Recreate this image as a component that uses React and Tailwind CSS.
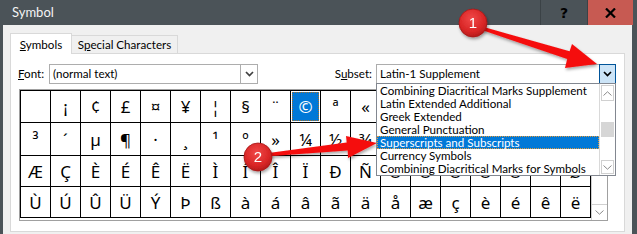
import React from 'react';

// grid of Latin-1 Supplement characters, 19 per row
// (cells under the open list in rows 1-2 are fully hidden, left empty)
const rows = [
    ['\u00A0', '¡', '¢', '£', '¤', '¥', '¦', '§', '¨', '©', 'ª', '«', '', '', '', '', '', '', ''],
    ['³', '´', 'µ', '¶', '·', '¸', '¹', 'º', '»', '¼', '½', '¾', '', '', '', '', '', '', ''],
    ['Æ', 'Ç', 'È', 'É', 'Ê', 'Ë', 'Ì', 'Í', 'Î', 'Ï', 'Ð', 'Ñ', 'Ò', 'Ó', 'Ô', 'Õ', 'Ö', '×', 'Ø'],
    ['Ù', 'Ú', 'Û', 'Ü', 'Ý', 'Þ', 'ß', 'à', 'á', 'â', 'ã', 'ä', 'å', 'æ', 'ç', 'è', 'é', 'ê', 'ë'],
];
const rowHeights = ['h-[32px]', 'h-[33px]', 'h-[31px]', 'h-[31px]'];

const subsets = [
    'Combining Diacritical Marks Supplement',
    'Latin Extended Additional',
    'Greek Extended',
    'General Punctuation',
    'Superscripts and Subscripts',
    'Currency Symbols',
    'Combining Diacritical Marks for Symbols',
];

const ComboChevron = ({ className }) => (
    <svg width="9" height="6" viewBox="0 0 9 6" className={className}>
        <path d="M1 1l3.5 3.5L8 1" fill="none" stroke="currentColor" strokeWidth="1.7" />
    </svg>
);

const ScrollChevron = ({ up }) => (
    <svg width="9" height="5" viewBox="0 0 9 5" className="text-[#8a8a8a]">
        <path d={up ? 'M0.5 4.5L4.5 0.8L8.5 4.5' : 'M0.5 0.5L4.5 4.2L8.5 0.5'} fill="none" stroke="currentColor" strokeWidth="1" />
    </svg>
);

const Badge = ({ cx, cy, label }) => (
    <g filter="url(#shadow)">
        <circle cx={cx} cy={cy} r="14" fill="url(#ball)" stroke="#a51717" strokeWidth="0.8" />
        <text x={cx} y={cy + 5} textAnchor="middle" fill="#fff" fontSize="15" fontFamily="Liberation Sans, Arial, sans-serif">{label}</text>
    </g>
);

const Annotations = () => (
    <svg className="absolute inset-0 pointer-events-none" width="637" height="234" viewBox="0 0 637 234">
        <defs>
            <radialGradient id="ball" cx="45%" cy="35%" r="65%">
                <stop offset="0%" stopColor="#f04848" />
                <stop offset="70%" stopColor="#d92626" />
                <stop offset="100%" stopColor="#b51b1b" />
            </radialGradient>
            <filter id="shadow" x="-30%" y="-30%" width="160%" height="170%">
                <feDropShadow dx="1" dy="2" stdDeviation="1.5" floodColor="#000" floodOpacity="0.35" />
            </filter>
        </defs>
        <polygon
            filter="url(#shadow)"
            fill="#f50f0f"
            points="478.5,25.5 569.6,51.3 572,44 597,64 565,68 567.2,58.9 477.5,28.5"
        />
        <polygon
            filter="url(#shadow)"
            fill="#f50f0f"
            points="264.8,153.5 346.7,142.5 346,136 377,143 348,158 347.7,150.5 265.2,156.5"
        />
        <Badge cx={473} cy={23} label="1" />
        <Badge cx={258} cy={157} label="2" />
    </svg>
);

const App = () => {
    return (
        <div className="relative w-[637px] h-[234px] overflow-hidden bg-[#4b5358] flex flex-col font-['Lato','Noto_Sans',sans-serif] text-[11.6px] text-black">
            {/* title bar */}
            <div className="h-[25px] flex items-stretch shrink-0">
                <div className="flex-1 flex items-center pl-[12px] text-[#f4f4f4] text-[13px]">Symbol</div>
                <div className="w-[47px] flex items-center justify-center border-l border-[#3b4246] text-black font-['DejaVu_Sans',sans-serif] font-bold text-[14px] leading-none">?</div>
                <div className="w-[46px] flex items-center justify-center bg-[#c75a52] border-l border-[#3b4246]">
                    <svg width="11" height="10" viewBox="0 0 11 10">
                        <path d="M1 0.5l9 9M10 0.5l-9 9" stroke="#000" strokeWidth="2.2" />
                    </svg>
                </div>
                <div className="w-[4px]" />
            </div>

            {/* dialog body */}
            <div className="flex-1 ml-[3px] mr-[5px] bg-[#f0f0f0] px-[7px] pt-[8px]">
                <div className="flex items-end h-[21px]">
                    <div className="relative z-10 w-[62px] h-[21px] bg-white border border-b-0 border-[#d9d9d9] flex items-center justify-center pt-[1px]">
                        <span><span className="underline">S</span>ymbols</span>
                    </div>
                    <div className="w-[106px] h-[19px] border border-l-0 border-b-0 border-[#d9d9d9] flex items-center justify-center">
                        <span>S<span className="underline">p</span>ecial Characters</span>
                    </div>
                </div>

                <div className="-mt-px h-[179px] bg-white border border-[#d9d9d9] pt-[10px]">
                    {/* font / subset row */}
                    <div className="flex items-center h-[20px] pl-[7px] pr-[8px]">
                        <span className="w-[31px]"><span className="underline">F</span>ont:</span>
                        <div className="w-[209px] h-[20px] border border-[#adadad] bg-white flex items-center">
                            <span className="flex-1 pl-[3px]">(normal text)</span>
                            <div className="w-[17px] h-full border-l border-[#adadad] flex items-center justify-center text-[#404040]">
                                <ComboChevron />
                            </div>
                        </div>
                        <div className="flex-1" />
                        <span className="mr-[4px]">S<span className="underline">u</span>bset:</span>
                        <div className="relative w-[240px] h-[20px] border border-[#adadad] bg-white flex items-center">
                            <span className="flex-1 pl-[3px]">Latin-1 Supplement</span>
                            <div className="w-[17px] h-[20px] -my-px -mr-px bg-[#cce4f7] border border-[#005499] flex items-center justify-center text-black">
                                <ComboChevron />
                            </div>

                            {/* open list */}
                            <div className="absolute top-full left-[-1px] w-[240px] h-[93px] z-20 bg-white border border-[#828790] flex">
                                <div className="flex-1 flex flex-col">
                                    {subsets.map((s, i) => (
                                        <div
                                            key={s}
                                            className={
                                                i === 4
                                                    ? 'h-[13px] leading-[11px] pl-[2px] bg-[#0078d7] text-white border border-dotted border-[#e09a3c] whitespace-nowrap'
                                                    : 'h-[13px] leading-[13px] pl-[3px] whitespace-nowrap'
                                            }
                                        >
                                            {s}
                                        </div>
                                    ))}
                                </div>
                                <div className="w-[16px] flex flex-col border-l border-[#d9d9d9] px-[1px] pt-[1px]">
                                    <div className="h-[16px] border border-[#d0d0d0] flex items-center justify-center"><ScrollChevron up /></div>
                                    <div className="h-[21px]" />
                                    <div className="h-[15px] bg-[#d6d6d6]" />
                                    <div className="h-[23px]" />
                                    <div className="h-[14px] border border-[#d0d0d0] flex items-center justify-center"><ScrollChevron /></div>
                                </div>
                            </div>
                        </div>
                    </div>

                    {/* character grid */}
                    <div className="mt-[5px] ml-[8px] w-[589px] border border-[#a0a0a0] flex">
                        <div className="pb-[2px]">
                            <div className="border-l border-t border-black font-['Noto_Sans',sans-serif]">
                                {rows.map((row, r) => (
                                    <div key={r} className={`flex ${rowHeights[r]}`}>
                                        {row.map((ch, c) => (
                                            <div key={c} className="w-[30px] h-full border-r border-b border-black flex">
                                                {r === 0 && c === 9 ? (
                                                    <div className="flex-1 m-[1px] bg-[#0078d7] border border-dotted border-[#a5702c] text-white flex items-center justify-center text-[17px]">
                                                        {ch}
                                                    </div>
                                                ) : (
                                                    <div className="flex-1 flex items-center justify-center text-[17px] pt-[1px]">{ch}</div>
                                                )}
                                            </div>
                                        ))}
                                    </div>
                                ))}
                            </div>
                        </div>
                        <div className="w-[16px] border-l border-[#d0d0d0] flex flex-col justify-end">
                            <div className="h-[16px] border-t border-[#d0d0d0] flex items-center justify-center"><ScrollChevron /></div>
                        </div>
                    </div>
                </div>
            </div>

            <Annotations />
        </div>
    );
};

export default App;
